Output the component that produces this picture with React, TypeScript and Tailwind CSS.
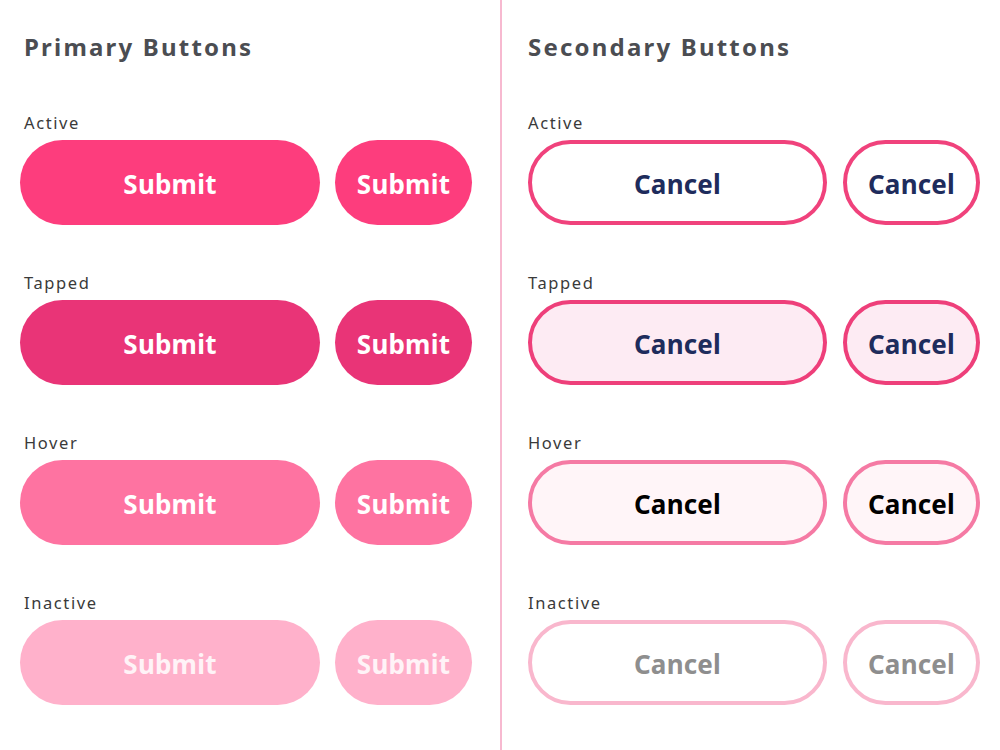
const font = { fontFamily: '"Noto Sans", "Open Sans", sans-serif' };

type Variant = {
  label: string;
  primary: string;
  primaryText: string;
  secondary: string;
  secondaryText: string;
};

const states: Variant[] = [
  {
    label: "Active",
    primary: "bg-[#fd3d7d]",
    primaryText: "text-white",
    secondary: "border-[#f0427c] bg-white",
    secondaryText: "text-[#1e2c5c]",
  },
  {
    label: "Tapped",
    primary: "bg-[#e93477]",
    primaryText: "text-white",
    secondary: "border-[#ee3f7a] bg-[#fdebf3]",
    secondaryText: "text-[#1e2c5c]",
  },
  {
    label: "Hover",
    primary: "bg-[#fe73a1]",
    primaryText: "text-white",
    secondary: "border-[#f57aa4] bg-[#fff5f8]",
    secondaryText: "text-black",
  },
  {
    label: "Inactive",
    primary: "bg-[#ffb1cb]",
    primaryText: "text-[#fff3f7]",
    secondary: "border-[#f9b7cd] bg-white",
    secondaryText: "text-[#8e8e8e]",
  },
];

function Title({ children }: { children: string }) {
  return (
    <h2 className="text-[24px] leading-8 font-bold tracking-[2.2px] text-[#4b4d52]">
      {children}
    </h2>
  );
}

function Label({ children }: { children: string }) {
  return (
    <p className="pt-px text-[16.5px] leading-5 tracking-[1.6px] text-[#3a3a3a]">{children}</p>
  );
}

export default function App() {
  return (
    <div className="flex w-[1000px] h-[750px] bg-white" style={font}>
      {/* primary */}
      <div className="w-[500px] pt-[31px]">
        <div className="pl-6">
          <Title>Primary Buttons</Title>
        </div>
        <div className="mt-[49px] flex flex-col gap-[47px]">
          {states.map((s) => (
            <div key={s.label}>
              <div className="pl-6">
                <Label>{s.label}</Label>
              </div>
              <div className="mt-[7px] flex gap-[15px] pl-5">
                <button
                  className={`h-[85px] w-[300px] rounded-full pt-[3px] text-[26px] font-bold tracking-[0.2px] ${s.primary} ${s.primaryText}`}
                >
                  Submit
                </button>
                <button
                  className={`h-[85px] w-[137px] rounded-full pt-[3px] text-[26px] font-bold tracking-[0.2px] ${s.primary} ${s.primaryText}`}
                >
                  Submit
                </button>
              </div>
            </div>
          ))}
        </div>
      </div>

      <div className="w-[2px] bg-[#f7b9d0]" />

      {/* secondary */}
      <div className="w-[498px] pt-[31px] pl-[26px]">
        <Title>Secondary Buttons</Title>
        <div className="mt-[49px] flex flex-col gap-[47px]">
          {states.map((s) => (
            <div key={s.label}>
              <Label>{s.label}</Label>
              <div className="mt-[7px] flex gap-[16px]">
                <button
                  className={`h-[85px] w-[299px] rounded-full border-[4px] pt-[3px] text-[26px] font-bold tracking-[0.2px] ${s.secondary} ${s.secondaryText}`}
                >
                  Cancel
                </button>
                <button
                  className={`h-[85px] w-[137px] rounded-full border-[4px] pt-[3px] text-[26px] font-bold tracking-[0.2px] ${s.secondary} ${s.secondaryText}`}
                >
                  Cancel
                </button>
              </div>
            </div>
          ))}
        </div>
      </div>
    </div>
  );
}
